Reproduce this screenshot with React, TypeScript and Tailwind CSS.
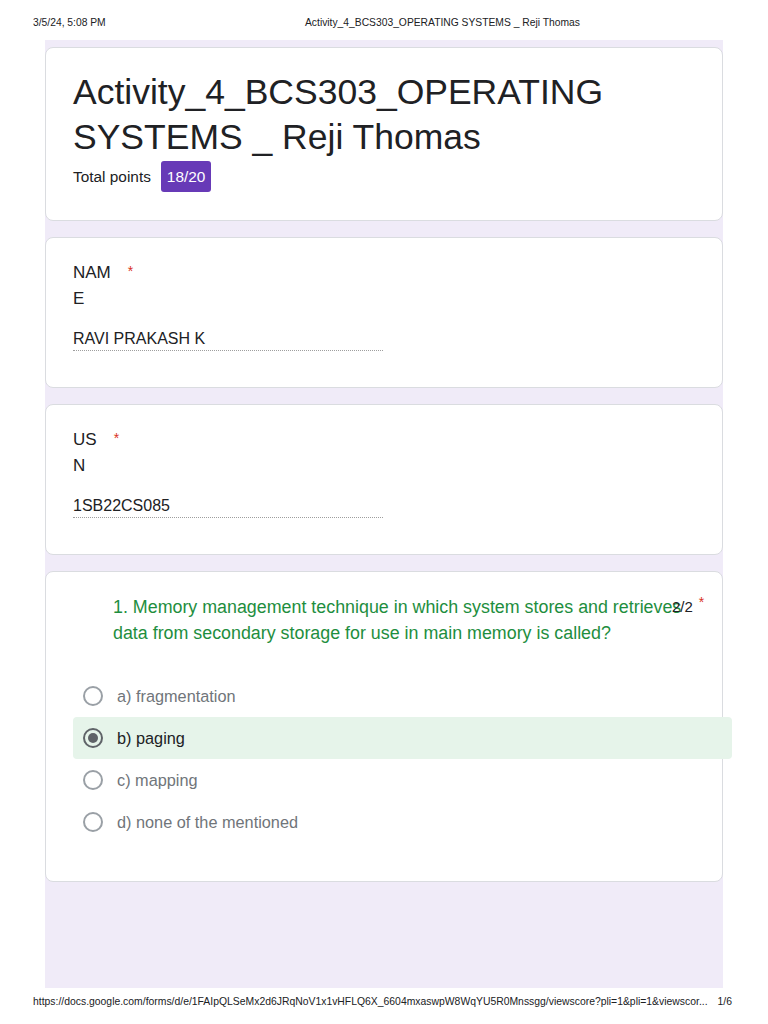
import React from 'react';

const options = [
  { label: 'a) fragmentation', selected: false },
  { label: 'b) paging', selected: true },
  { label: 'c) mapping', selected: false },
  { label: 'd) none of the mentioned', selected: false },
];

const Radio = ({ selected }: { selected: boolean }) => (
  <span
    className={`flex h-5 w-5 shrink-0 items-center justify-center rounded-full border-2 ${
      selected ? 'border-[#5f6368]' : 'border-[#9aa0a6]'
    }`}
  >
    {selected && <span className="h-[10px] w-[10px] rounded-full bg-[#5f6368]" />}
  </span>
);

const FieldCard = ({ lines, value }: { lines: string[]; value: string }) => (
  <div className="rounded-lg border border-[#dadce0] bg-white pl-[27px] pt-[22px] pb-[36px]">
    <div className="flex items-start">
      <div className="text-[17px] leading-[26px] text-[#202124]">
        {lines.map((l) => (
          <div key={l}>{l}</div>
        ))}
      </div>
      <span className="ml-[17px] text-[14px] leading-[22px] text-[#d93025]">*</span>
    </div>
    <div className="mt-[18px] w-[310px] border-b border-dotted border-[#9e9e9e] pb-[2px] text-[16px] leading-[18px] text-[#202124]">
      {value}
    </div>
  </div>
);

export default function App() {
  return (
    <div className="min-h-[1024px] w-[768px] bg-white font-['Liberation_Sans',Arial,sans-serif]">
      {/* print header */}
      <div className="flex h-[40px] items-start pt-[15px] text-[10.3px] text-[#202124]">
        <span className="ml-[33px] w-[272px]">3/5/24, 5:08 PM</span>
        <span>Activity_4_BCS303_OPERATING SYSTEMS _ Reji Thomas</span>
      </div>

      <div className="mx-[45px] flex h-[948px] flex-col gap-4 bg-[#f0ebf8] pt-[7px]">
        {/* title card */}
        <div className="rounded-lg border border-[#dadce0] bg-white pl-[27px] pt-[22px] pb-[28px]">
          <h1 className="text-[35.5px] leading-[45px] text-[#202124]">
            Activity_4_BCS303_OPERATING
            <br />
            SYSTEMS _ Reji Thomas
          </h1>
          <div className="mt-[1px] flex items-center gap-[10px] text-[15.4px] text-[#202124]">
            <span>Total points</span>
            <span className="flex h-[31px] items-center rounded-[3px] bg-[#673ab7] px-[6px] text-[15.4px] text-white">
              18/20
            </span>
          </div>
        </div>

        <FieldCard lines={['NAM', 'E']} value="RAVI PRAKASH K" />
        <FieldCard lines={['US', 'N']} value="1SB22CS085" />

        {/* question card */}
        <div className="rounded-lg border border-[#dadce0] bg-white pl-[27px] pt-[22px] pb-[38px]">
          <div className="flex items-start pl-[40px]">
            <div className="w-[570px] shrink-0 text-[17.85px] leading-[26px] text-[#1e8e3e]">
              1. Memory management technique in which system stores and retrieves data from secondary
              storage for use in main memory is called?
            </div>
            <span className="ml-[-11px] mt-[3px] text-[15px] leading-[20px] text-[#202124]">2/2</span>
            <span className="ml-[6px] text-[14px] leading-[16px] text-[#d93025]">*</span>
          </div>
          <div className="mt-[29px] w-[659px]">
            {options.map((o) => (
              <div
                key={o.label}
                className={`flex h-[42px] items-center gap-[14px] rounded-[4px] pl-[10px] ${
                  o.selected ? 'bg-[#e6f4ea]' : ''
                }`}
              >
                <Radio selected={o.selected} />
                <span
                  className={`text-[16.3px] ${o.selected ? 'text-[#202124]' : 'text-[#70757a]'}`}
                >
                  {o.label}
                </span>
              </div>
            ))}
          </div>
        </div>
      </div>

      {/* print footer */}
      <div className="flex items-center pt-[6px] text-[10.4px] text-[#202124]">
        <span className="ml-[33px]">
          https://docs.google.com/forms/d/e/1FAIpQLSeMx2d6JRqNoV1x1vHFLQ6X_6604mxaswpW8WqYU5R0Mnssgg/viewscore?pli=1&amp;pli=1&amp;viewscor...
        </span>
        <span className="ml-auto mr-[36px]">1/6</span>
      </div>
    </div>
  );
}
